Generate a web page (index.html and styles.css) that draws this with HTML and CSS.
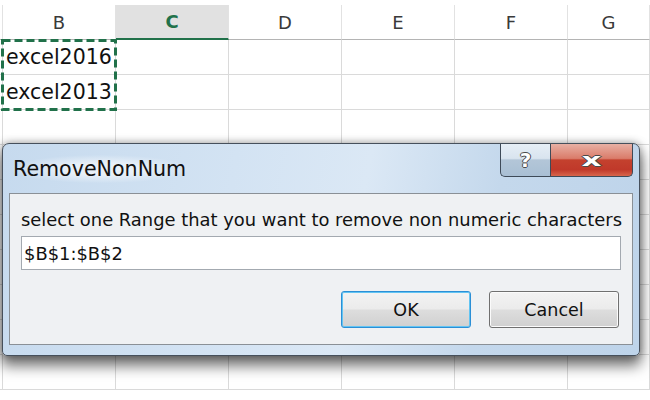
FILE: index.html
```html
<!DOCTYPE html>
<html lang="en">
<head>
    <meta charset="UTF-8">
    <title>RemoveNonNum</title>
    <link rel="stylesheet" href="styles.css">
</head>
<body>
    <!-- Tabelle im Hintergrund -->
    <div class="sheet">
        <div class="cell head"></div>
        <div class="cell head">B</div>
        <div class="cell head selected">C</div>
        <div class="cell head">D</div>
        <div class="cell head">E</div>
        <div class="cell head">F</div>
        <div class="cell head">G</div>

        <div class="cell"></div><div class="cell text">excel2016</div><div class="cell"></div><div class="cell"></div><div class="cell"></div><div class="cell"></div><div class="cell"></div>
        <div class="cell"></div><div class="cell text">excel2013</div><div class="cell"></div><div class="cell"></div><div class="cell"></div><div class="cell"></div><div class="cell"></div>
        <div class="cell"></div><div class="cell"></div><div class="cell"></div><div class="cell"></div><div class="cell"></div><div class="cell"></div><div class="cell"></div>
        <div class="cell"></div><div class="cell"></div><div class="cell"></div><div class="cell"></div><div class="cell"></div><div class="cell"></div><div class="cell"></div>
        <div class="cell"></div><div class="cell"></div><div class="cell"></div><div class="cell"></div><div class="cell"></div><div class="cell"></div><div class="cell"></div>
        <div class="cell"></div><div class="cell"></div><div class="cell"></div><div class="cell"></div><div class="cell"></div><div class="cell"></div><div class="cell"></div>
        <div class="cell"></div><div class="cell"></div><div class="cell"></div><div class="cell"></div><div class="cell"></div><div class="cell"></div><div class="cell"></div>
        <div class="cell"></div><div class="cell"></div><div class="cell"></div><div class="cell"></div><div class="cell"></div><div class="cell"></div><div class="cell"></div>
        <div class="cell"></div><div class="cell"></div><div class="cell"></div><div class="cell"></div><div class="cell"></div><div class="cell"></div><div class="cell"></div>
        <div class="cell"></div><div class="cell"></div><div class="cell"></div><div class="cell"></div><div class="cell"></div><div class="cell"></div><div class="cell"></div>

        <!-- Kopierrahmen B1:B2 -->
        <svg class="ants" width="116" height="72" viewBox="0 0 116 72">
            <rect x="1.5" y="1.5" width="113" height="69" fill="none" stroke="#21714a" stroke-width="3" stroke-dasharray="8 4"/>
        </svg>
    </div>

    <!-- Dialog -->
    <div class="dialog">
        <div class="titlebar">
            <span class="title">RemoveNonNum</span>
            <div class="caption-btns">
                <button class="cap help">?</button>
                <button class="cap close"><span class="x-glyph">x</span></button>
            </div>
        </div>
        <div class="panel">
            <label class="prompt" for="range">select one Range that you want to remove non numeric characters</label>
            <input class="range" id="range" type="text" value="$B$1:$B$2">
            <div class="actions">
                <button class="btn default">OK</button>
                <button class="btn">Cancel</button>
            </div>
        </div>
    </div>
</body>
</html>
```

FILE: styles.css
```css
body {
    margin: 0;
    background: #fff;
    font-family: 'DejaVu Sans', Verdana, sans-serif;
    overflow: hidden;
}
.sheet {
    position: relative;
    display: grid;
    grid-template-columns: 3px repeat(5, 113px) 1fr;
    grid-auto-rows: 35px;
    padding-top: 5px;
}
.cell {
    box-sizing: border-box;
    border-right: 1px solid #dadada;
    border-bottom: 1px solid #dadada;
}
.cell.head {
    display: flex;
    align-items: center;
    justify-content: center;
    font-size: 18px;
    color: #3a3a3a;
    border-right-color: #e2e2e2;
    border-bottom: 1px solid #b4b4b4;
}
.cell.head.selected {
    background: #e1e1e1;
    color: #21714a;
    font-weight: bold;
    border-bottom: 2px solid #21714a;
}
.cell.text {
    display: flex;
    align-items: center;
    padding-left: 3px;
    font-size: 20.5px;
    color: #111;
}
.ants {
    position: absolute;
    left: 1px;
    top: 39px;
}
.dialog {
    position: absolute;
    left: 2px;
    top: 143px;
    width: 638px;
    box-sizing: border-box;
    border: 1px solid #46505c;
    border-radius: 7px 7px 5px 5px;
    background: linear-gradient(100deg, #c6daee 0%, #d3e3f3 35%, #dbe8f5 55%, #c4d8ec 75%, #bed4ea 100%);
    box-shadow: 0 9px 14px 1px rgba(0,0,0,0.55), 0 0 8px rgba(0,0,0,0.35);
}
.titlebar {
    height: 49px;
    display: flex;
    justify-content: space-between;
    align-items: flex-start;
}
.title {
    align-self: center;
    margin-left: 9px;
    padding: 2px 4px 2px 1px;
    font-size: 20.6px;
    color: #111;
    background: radial-gradient(ellipse at center, rgba(255,255,255,0.55) 30%, rgba(255,255,255,0) 72%);
}
.caption-btns {
    display: flex;
    margin-right: 6px;
}
.cap {
    height: 33px;
    margin: 0;
    padding: 0;
    box-sizing: border-box;
    border: 1px solid #3e4a58;
    border-top: none;
    font-family: 'DejaVu Sans', sans-serif;
    font-weight: bold;
    color: #fff;
    text-shadow: 1px 0 #4a4a4a, -1px 0 #4a4a4a, 0 1px #4a4a4a, 0 -1px #4a4a4a;
}
.cap.help {
    width: 50px;
    font-size: 20px;
    border-right: none;
    border-radius: 0 0 0 5px;
    background: linear-gradient(#e6eef6 0%, #d9e4ef 45%, #b3c6d8 50%, #a9bfd4 100%);
}
.cap.close {
    width: 83px;
    font-size: 20px;
    line-height: 1;
    border-radius: 0 0 5px 0;
    background: linear-gradient(#e8b0a4 0%, #da7c6a 45%, #c4412e 50%, #c0392a 80%, #d8664c 100%);
}
.x-glyph {
    display: inline-block;
    transform: scale(1.55, 0.85);
}
.panel {
    margin: 0 6px 10px 6px;
    height: 152px;
    box-sizing: border-box;
    border: 1px solid #8a9096;
    background: #eff1f3;
    padding: 0 11px;
    display: flex;
    flex-direction: column;
}
.prompt {
    margin-top: 16px;
    font-size: 17.9px;
    line-height: 20px;
    color: #111;
    white-space: nowrap;
}
.range {
    margin-top: 6px;
    height: 34px;
    box-sizing: border-box;
    border: 1px solid #a3a9b0;
    padding: 0 2px;
    font-family: 'DejaVu Sans', sans-serif;
    font-size: 17.9px;
    color: #111;
    background: #fff;
    outline: none;
}
.actions {
    display: flex;
    justify-content: flex-end;
    gap: 18px;
    margin-top: 21px;
    margin-right: 2px;
}
.btn {
    width: 130px;
    height: 37px;
    border: 1px solid #707070;
    border-radius: 3px;
    font-family: 'DejaVu Sans', sans-serif;
    font-size: 17.5px;
    color: #111;
    background: linear-gradient(#f3f3f3 0%, #ebebeb 48%, #dddddd 52%, #d0d0d0 100%);
    box-shadow: inset 0 0 0 1px #fbfbfb;
}
.btn.default {
    border-color: #2b8fd6;
    box-shadow: inset 0 0 0 1px #62c4f2;
}
```
